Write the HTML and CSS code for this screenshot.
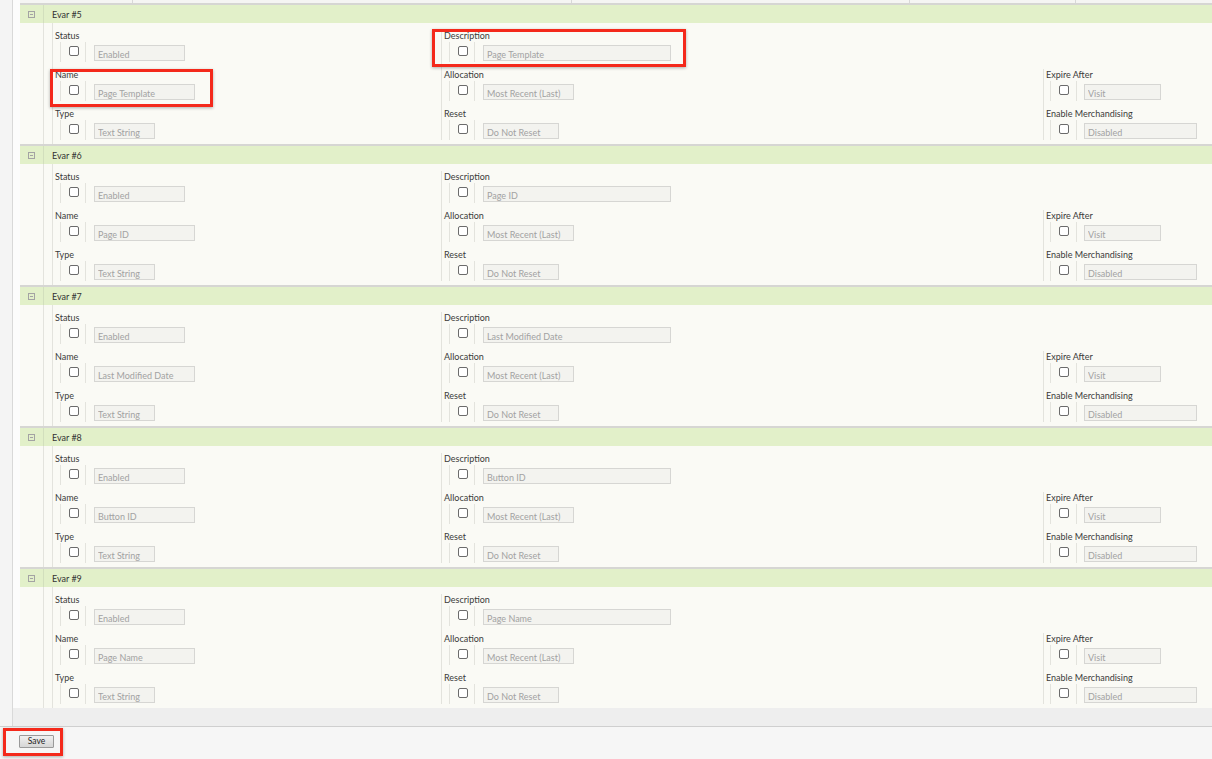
FILE: index.html
```html
<!DOCTYPE html>
<html>
<head>
  <title>Evars</title>
  <link rel="stylesheet" href="styles.css">
</head>
<body>
  <div class='page'>
    <div class='rail'></div>
    <div class='main'>
      <div class='sections'>
        <div class='toprow'>
          <div class='tcell w1'></div>
          <div class='tcell w2'></div>
          <div class='tcell w3'></div>
          <div class='tcell w4'></div>
          <div class='tcell'></div>
        </div>

        <!-- Evar 5 -->
        <div class='evar'>
          <div class='evar-head'>
            <div class='evar-toggle'><svg width='7' height='7' viewBox='0 0 7 7'><rect x='0.5' y='0.5' width='6' height='6' fill='none' stroke='#a3a3a3'/><line x1='2' y1='3.5' x2='5' y2='3.5' stroke='#a3a3a3'/></svg></div>
            <div class='evar-title'>Evar #5</div>
          </div>
          <div class='evar-body'>
            <div class='evar-gutter'></div>
            <div class='evar-fields'>
              <div class='cell first'><div class='lbl'>Status</div><div class='field'><input type='checkbox' class='chk'><span class='sep'><input class='inp w-status' value='Enabled' readonly></span></div></div>
              <div class='cell'><div class='lbl'>Description</div><div class='field'><input type='checkbox' class='chk'><span class='sep'><input class='inp w-desc' value='Page Template' readonly></span></div></div>
              <div class='cell empty'></div>
              <div class='cell first'><div class='lbl'>Name</div><div class='field'><input type='checkbox' class='chk'><span class='sep'><input class='inp w-name' value='Page Template' readonly></span></div></div>
              <div class='cell'><div class='lbl'>Allocation</div><div class='field'><input type='checkbox' class='chk'><span class='sep'><input class='inp w-alloc' value='Most Recent (Last)' readonly></span></div></div>
              <div class='cell narrow'><div class='lbl'>Expire After</div><div class='field'><input type='checkbox' class='chk'><span class='sep'><input class='inp w-expire' value='Visit' readonly></span></div></div>
              <div class='cell first last'><div class='lbl'>Type</div><div class='field'><input type='checkbox' class='chk'><span class='sep'><input class='inp w-type' value='Text String' readonly></span></div></div>
              <div class='cell last'><div class='lbl'>Reset</div><div class='field'><input type='checkbox' class='chk'><span class='sep'><input class='inp w-reset' value='Do Not Reset' readonly></span></div></div>
              <div class='cell narrow last'><div class='lbl'>Enable Merchandising</div><div class='field'><input type='checkbox' class='chk'><span class='sep'><input class='inp w-merch' value='Disabled' readonly></span></div></div>
            </div>
          </div>
        </div>

        <!-- Evar 6 -->
        <div class='evar'>
          <div class='evar-head'>
            <div class='evar-toggle'><svg width='7' height='7' viewBox='0 0 7 7'><rect x='0.5' y='0.5' width='6' height='6' fill='none' stroke='#a3a3a3'/><line x1='2' y1='3.5' x2='5' y2='3.5' stroke='#a3a3a3'/></svg></div>
            <div class='evar-title'>Evar #6</div>
          </div>
          <div class='evar-body'>
            <div class='evar-gutter'></div>
            <div class='evar-fields'>
              <div class='cell first'><div class='lbl'>Status</div><div class='field'><input type='checkbox' class='chk'><span class='sep'><input class='inp w-status' value='Enabled' readonly></span></div></div>
              <div class='cell'><div class='lbl'>Description</div><div class='field'><input type='checkbox' class='chk'><span class='sep'><input class='inp w-desc' value='Page ID' readonly></span></div></div>
              <div class='cell empty'></div>
              <div class='cell first'><div class='lbl'>Name</div><div class='field'><input type='checkbox' class='chk'><span class='sep'><input class='inp w-name' value='Page ID' readonly></span></div></div>
              <div class='cell'><div class='lbl'>Allocation</div><div class='field'><input type='checkbox' class='chk'><span class='sep'><input class='inp w-alloc' value='Most Recent (Last)' readonly></span></div></div>
              <div class='cell narrow'><div class='lbl'>Expire After</div><div class='field'><input type='checkbox' class='chk'><span class='sep'><input class='inp w-expire' value='Visit' readonly></span></div></div>
              <div class='cell first last'><div class='lbl'>Type</div><div class='field'><input type='checkbox' class='chk'><span class='sep'><input class='inp w-type' value='Text String' readonly></span></div></div>
              <div class='cell last'><div class='lbl'>Reset</div><div class='field'><input type='checkbox' class='chk'><span class='sep'><input class='inp w-reset' value='Do Not Reset' readonly></span></div></div>
              <div class='cell narrow last'><div class='lbl'>Enable Merchandising</div><div class='field'><input type='checkbox' class='chk'><span class='sep'><input class='inp w-merch' value='Disabled' readonly></span></div></div>
            </div>
          </div>
        </div>

        <!-- Evar 7 -->
        <div class='evar'>
          <div class='evar-head'>
            <div class='evar-toggle'><svg width='7' height='7' viewBox='0 0 7 7'><rect x='0.5' y='0.5' width='6' height='6' fill='none' stroke='#a3a3a3'/><line x1='2' y1='3.5' x2='5' y2='3.5' stroke='#a3a3a3'/></svg></div>
            <div class='evar-title'>Evar #7</div>
          </div>
          <div class='evar-body'>
            <div class='evar-gutter'></div>
            <div class='evar-fields'>
              <div class='cell first'><div class='lbl'>Status</div><div class='field'><input type='checkbox' class='chk'><span class='sep'><input class='inp w-status' value='Enabled' readonly></span></div></div>
              <div class='cell'><div class='lbl'>Description</div><div class='field'><input type='checkbox' class='chk'><span class='sep'><input class='inp w-desc' value='Last Modified Date' readonly></span></div></div>
              <div class='cell empty'></div>
              <div class='cell first'><div class='lbl'>Name</div><div class='field'><input type='checkbox' class='chk'><span class='sep'><input class='inp w-name' value='Last Modified Date' readonly></span></div></div>
              <div class='cell'><div class='lbl'>Allocation</div><div class='field'><input type='checkbox' class='chk'><span class='sep'><input class='inp w-alloc' value='Most Recent (Last)' readonly></span></div></div>
              <div class='cell narrow'><div class='lbl'>Expire After</div><div class='field'><input type='checkbox' class='chk'><span class='sep'><input class='inp w-expire' value='Visit' readonly></span></div></div>
              <div class='cell first last'><div class='lbl'>Type</div><div class='field'><input type='checkbox' class='chk'><span class='sep'><input class='inp w-type' value='Text String' readonly></span></div></div>
              <div class='cell last'><div class='lbl'>Reset</div><div class='field'><input type='checkbox' class='chk'><span class='sep'><input class='inp w-reset' value='Do Not Reset' readonly></span></div></div>
              <div class='cell narrow last'><div class='lbl'>Enable Merchandising</div><div class='field'><input type='checkbox' class='chk'><span class='sep'><input class='inp w-merch' value='Disabled' readonly></span></div></div>
            </div>
          </div>
        </div>

        <!-- Evar 8 -->
        <div class='evar'>
          <div class='evar-head'>
            <div class='evar-toggle'><svg width='7' height='7' viewBox='0 0 7 7'><rect x='0.5' y='0.5' width='6' height='6' fill='none' stroke='#a3a3a3'/><line x1='2' y1='3.5' x2='5' y2='3.5' stroke='#a3a3a3'/></svg></div>
            <div class='evar-title'>Evar #8</div>
          </div>
          <div class='evar-body'>
            <div class='evar-gutter'></div>
            <div class='evar-fields'>
              <div class='cell first'><div class='lbl'>Status</div><div class='field'><input type='checkbox' class='chk'><span class='sep'><input class='inp w-status' value='Enabled' readonly></span></div></div>
              <div class='cell'><div class='lbl'>Description</div><div class='field'><input type='checkbox' class='chk'><span class='sep'><input class='inp w-desc' value='Button ID' readonly></span></div></div>
              <div class='cell empty'></div>
              <div class='cell first'><div class='lbl'>Name</div><div class='field'><input type='checkbox' class='chk'><span class='sep'><input class='inp w-name' value='Button ID' readonly></span></div></div>
              <div class='cell'><div class='lbl'>Allocation</div><div class='field'><input type='checkbox' class='chk'><span class='sep'><input class='inp w-alloc' value='Most Recent (Last)' readonly></span></div></div>
              <div class='cell narrow'><div class='lbl'>Expire After</div><div class='field'><input type='checkbox' class='chk'><span class='sep'><input class='inp w-expire' value='Visit' readonly></span></div></div>
              <div class='cell first last'><div class='lbl'>Type</div><div class='field'><input type='checkbox' class='chk'><span class='sep'><input class='inp w-type' value='Text String' readonly></span></div></div>
              <div class='cell last'><div class='lbl'>Reset</div><div class='field'><input type='checkbox' class='chk'><span class='sep'><input class='inp w-reset' value='Do Not Reset' readonly></span></div></div>
              <div class='cell narrow last'><div class='lbl'>Enable Merchandising</div><div class='field'><input type='checkbox' class='chk'><span class='sep'><input class='inp w-merch' value='Disabled' readonly></span></div></div>
            </div>
          </div>
        </div>

        <!-- Evar 9 -->
        <div class='evar'>
          <div class='evar-head'>
            <div class='evar-toggle'><svg width='7' height='7' viewBox='0 0 7 7'><rect x='0.5' y='0.5' width='6' height='6' fill='none' stroke='#a3a3a3'/><line x1='2' y1='3.5' x2='5' y2='3.5' stroke='#a3a3a3'/></svg></div>
            <div class='evar-title'>Evar #9</div>
          </div>
          <div class='evar-body'>
            <div class='evar-gutter'></div>
            <div class='evar-fields'>
              <div class='cell first'><div class='lbl'>Status</div><div class='field'><input type='checkbox' class='chk'><span class='sep'><input class='inp w-status' value='Enabled' readonly></span></div></div>
              <div class='cell'><div class='lbl'>Description</div><div class='field'><input type='checkbox' class='chk'><span class='sep'><input class='inp w-desc' value='Page Name' readonly></span></div></div>
              <div class='cell empty'></div>
              <div class='cell first'><div class='lbl'>Name</div><div class='field'><input type='checkbox' class='chk'><span class='sep'><input class='inp w-name' value='Page Name' readonly></span></div></div>
              <div class='cell'><div class='lbl'>Allocation</div><div class='field'><input type='checkbox' class='chk'><span class='sep'><input class='inp w-alloc' value='Most Recent (Last)' readonly></span></div></div>
              <div class='cell narrow'><div class='lbl'>Expire After</div><div class='field'><input type='checkbox' class='chk'><span class='sep'><input class='inp w-expire' value='Visit' readonly></span></div></div>
              <div class='cell first last'><div class='lbl'>Type</div><div class='field'><input type='checkbox' class='chk'><span class='sep'><input class='inp w-type' value='Text String' readonly></span></div></div>
              <div class='cell last'><div class='lbl'>Reset</div><div class='field'><input type='checkbox' class='chk'><span class='sep'><input class='inp w-reset' value='Do Not Reset' readonly></span></div></div>
              <div class='cell narrow last'><div class='lbl'>Enable Merchandising</div><div class='field'><input type='checkbox' class='chk'><span class='sep'><input class='inp w-merch' value='Disabled' readonly></span></div></div>
            </div>
          </div>
        </div>
      </div>
      <div class='band'></div>
    </div>
  </div>

  <div class='footer'>
    <button class='save-btn'>Save</button>
  </div>

  <!-- annotation boxes -->
  <div class='mark mark-name'></div>
  <div class='mark mark-desc'></div>
  <div class='mark mark-save'></div>
</body>
</html>
```

FILE: styles.css
```css
body {
  margin: 0;
  font-family: Lato, "Open Sans", sans-serif;
  font-size: 9px;
  color: #333;
  background-color: #f5f5f5;
}
.page {
  display: flex;
}
.rail {
  width: 12px;
  background-color: #f4f4f4;
}
.main {
  flex: 1;
  border-left: 1px solid #d9d9d9;
  background-color: #fcfcfc;
}
.sections {
  padding-left: 7px;
}
.toprow {
  display: flex;
  height: 3px;
  background-color: #f5f5f3;
}
.tcell {
  border-right: 1px solid #d8d8d8;
}
.tcell:last-child {
  border-right: none;
  flex: 1;
}
.w1 { width: 112px; }
.w2 { width: 438px; }
.w3 { width: 337px; }
.w4 { width: 165px; }

.evar {
  border-top: 2px solid #d6d6d3;
}
.evar-head {
  display: flex;
  align-items: center;
  height: 18px;
  background-color: #e2f0c9;
}
.evar-toggle {
  width: 23px;
  height: 18px;
  border-right: 1px solid #d2dfbd;
  display: flex;
  align-items: center;
  justify-content: center;
}
.evar-toggle svg {
  display: block;
}
.evar-title {
  padding-left: 8px;
  padding-top: 1px;
  color: #333;
}
.evar-body {
  display: flex;
  background-color: #fafaf5;
}
.evar-gutter {
  width: 23px;
  border-right: 1px solid #e3e3dd;
}
.evar-fields {
  flex: 1;
  margin-left: 8px;
  border-left: 1px solid #e3e3dd;
  display: grid;
  grid-template-columns: 388px 602px 1fr;
  padding: 7px 0 4px;
}
.cell {
  border-left: 1px solid #e3e3dd;
  padding-left: 2px;
  padding-bottom: 7px;
}
.cell.first {
  border-left: none;
}
.cell.empty {
  border-left: none;
}
.cell.last {
  padding-bottom: 0;
}
.lbl {
  line-height: 12px;
  height: 12px;
  white-space: nowrap;
  color: #3a3a3a;
}
.field {
  display: flex;
  align-items: center;
  height: 20px;
  margin-left: 5px;
  border-left: 1px solid #e3e3dd;
  padding-left: 8px;
}
.cell.narrow .field {
  margin-left: 4px;
}
.chk {
  appearance: none;
  -webkit-appearance: none;
  box-sizing: border-box;
  width: 10px;
  height: 10px;
  margin: 4px 6px 0 0;
  border: 1px solid #6b6b6b;
  border-radius: 2px;
  background-color: #fff;
  align-self: flex-start;
}
.cell.narrow .chk {
  margin-right: 7px;
}
.sep {
  display: flex;
  align-items: center;
  height: 20px;
  border-left: 1px solid #e3e3dd;
  padding-left: 8px;
}
.cell.narrow .sep {
  padding-left: 7px;
}
.inp {
  box-sizing: border-box;
  height: 16px;
  margin: 2px 0 0;
  padding: 2px 3px 0;
  border: 1px solid #d6d6d3;
  background-color: #f3f3ef;
  font-family: Lato, "Open Sans", sans-serif;
  font-size: 9px;
  color: #a2a2a2;
  outline: none;
}
.w-status { width: 91px; }
.w-name { width: 101px; }
.w-type { width: 61px; }
.w-desc { width: 188px; }
.w-alloc { width: 91px; }
.w-reset { width: 76px; }
.w-expire { width: 77px; }
.w-merch { width: 113px; }

.band {
  height: 18px;
  background-color: #eeeeee;
}
.footer {
  border-top: 1px solid #cfcfcf;
  background-color: #f6f6f6;
  padding: 8px 19px;
  height: 16px;
}
.save-btn {
  display: block;
  box-sizing: border-box;
  width: 35px;
  height: 13px;
  padding: 0;
  margin: 0;
  border: 1px solid #9a9a9a;
  border-radius: 1px;
  background: linear-gradient(#f0f0f0, #d6d6d6);
  font-family: Lato, "Open Sans", sans-serif;
  font-size: 8.5px;
  line-height: 11px;
  color: #222;
}

.mark {
  position: absolute;
  box-sizing: border-box;
  border: 3px solid #f4291b;
  box-shadow: 0 1px 3px rgba(0,0,0,0.3);
}
.mark-name {
  left: 50px;
  top: 69px;
  width: 163px;
  height: 38px;
}
.mark-desc {
  left: 432px;
  top: 29px;
  width: 254px;
  height: 38px;
}
.mark-save {
  left: 3px;
  top: 728px;
  width: 60px;
  height: 28px;
}
```
